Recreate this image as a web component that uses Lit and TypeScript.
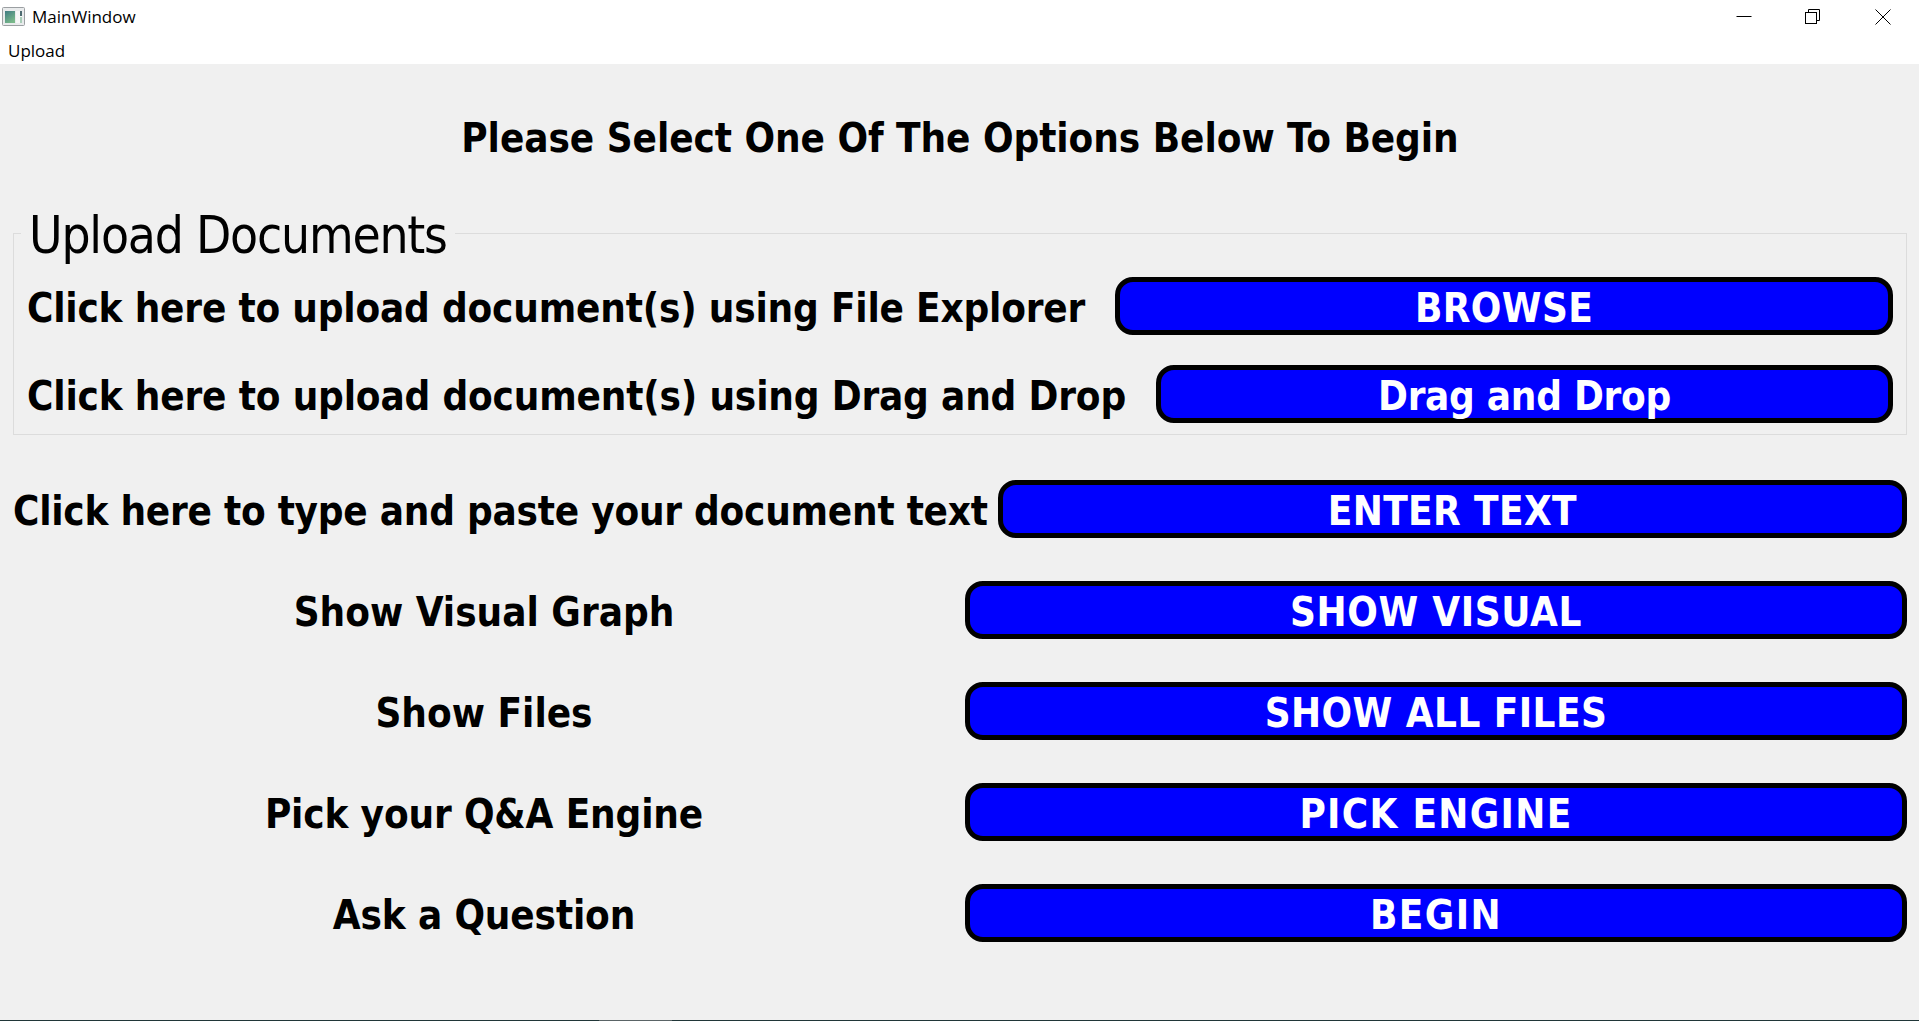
import { LitElement, html, css } from "lit";
import { customElement } from "lit/decorators.js";

type Item = { label: string; btn: string; labelLs?: number; btnLs?: number };

const UPLOADS: Item[] = [
  { label: "Click here to upload document(s) using File Explorer", btn: "BROWSE", labelLs: -0.19, btnLs: 0.4 },
  { label: "Click here to upload document(s) using Drag and Drop", btn: "Drag and Drop", labelLs: -0.17, btnLs: -0.28 },
];

const LOWER: Item[] = [
  { label: "Show Visual Graph", btn: "SHOW VISUAL", btnLs: 0.66 },
  { label: "Show Files", btn: "SHOW ALL FILES", btnLs: 0.44 },
  { label: "Pick your Q&A Engine", btn: "PICK ENGINE", labelLs: -0.15, btnLs: 1.3 },
  { label: "Ask a Question", btn: "BEGIN", labelLs: -0.15, btnLs: 1.4 },
];

const ls = (v?: number) => (v ? `letter-spacing:${v}px` : "");

@customElement("app-root")
export class AppRoot extends LitElement {
  static styles = css`
    :host {
      display: flex;
      flex-direction: column;
      width: 1919px;
      height: 1021px;
      overflow: hidden;
      background: #fff;
      font-family: "DejaVu Sans Condensed", "DejaVu Sans", sans-serif;
      color: #000;
    }
    .titlebar {
      height: 32px;
      display: flex;
      align-items: center;
      flex: none;
    }
    .appicon { margin: 1px 0 0 2px; flex: none; }
    .wintitle {
      margin-left: 6px;
      font: 17px "Open Sans", sans-serif;
      flex: 1;
    }
    .winbtn {
      width: 69px;
      height: 32px;
      box-sizing: border-box;
      padding-top: 9px;
      display: flex;
      align-items: flex-start;
      justify-content: center;
    }
    .winbtn.close { width: 72px; }
    .menubar {
      height: 32px;
      box-sizing: border-box;
      flex: none;
      padding: 4px 8px 0;
      display: flex;
      align-items: center;
      font: 17px "Open Sans", sans-serif;
    }
    .content {
      flex: 1;
      background: #f0f0f0;
      padding: 0 12px 0 13px;
      min-height: 0;
    }
    .heading {
      height: 141px;
      padding-top: 3px;
      display: flex;
      align-items: center;
      justify-content: center;
      font-size: 40px;
      font-weight: 700;
      letter-spacing: -0.05px;
    }
    fieldset {
      margin: 0;
      padding: 0 13px 11px;
      border: 1px solid #dcdcdc;
      min-width: 0;
      display: flex;
      flex-direction: column;
      gap: 30px;
    }
    legend {
      margin-left: -6px;
      padding: 6px 8px 0;
      font-size: 51px;
      line-height: 44px;
      font-weight: 400;
      letter-spacing: -1.2px;
    }
    .first { margin-top: 19px; }
    .row {
      display: flex;
      align-items: center;
      gap: 30px;
      font-size: 40px;
      font-weight: 700;
      white-space: nowrap;
    }
    .row > span, .grid > span { padding-top: 3px; }
    .button {
      flex: 1;
      height: 58px;
      box-sizing: border-box;
      padding-top: 3px;
      background: #0000ff;
      border: 5px solid #000;
      border-radius: 18px;
      color: #fff;
      font-size: 40px;
      font-weight: 700;
      display: flex;
      align-items: center;
      justify-content: center;
      white-space: nowrap;
    }
    .rows { margin-top: 45px; display: flex; flex-direction: column; gap: 43px; }
    .row.enter { gap: 10px; }
    .grid {
      display: grid;
      grid-template-columns: 942px 1fr;
      column-gap: 10px;
      align-items: center;
      font-size: 40px;
      font-weight: 700;
    }
    .grid .label { text-align: center; }
    .edge {
      height: 1px;
      flex: none;
      background: linear-gradient(to right, #203638 599px, #5a6466 599px, #5a6466 672px, #203638 672px);
    }
  `;

  render() {
    return html`
      <div class="titlebar">
        <svg class="appicon" width="24" height="19" viewBox="0 0 24 19">
          <defs>
            <linearGradient id="pane" x1="0" y1="0" x2="0.6" y2="1">
              <stop offset="0" stop-color="#3e7a82"/>
              <stop offset="1" stop-color="#79b98a"/>
            </linearGradient>
          </defs>
          <rect x="0.5" y="0.5" width="22" height="18" rx="1" fill="#e9ebec" stroke="#9b9fa2"/>
          <rect x="3" y="4" width="10" height="12" fill="url(#pane)"/>
          <rect x="14" y="4" width="6" height="12" fill="#f6f7f7"/>
          <rect x="18" y="4" width="2" height="5" fill="#4d6a70"/>
          <rect x="18" y="10" width="2" height="6" fill="#a9cdb8"/>
        </svg>
        <span class="wintitle">MainWindow</span>
        <div class="winbtn">
          <svg width="16" height="16" viewBox="0 0 16 16"><path d="M0.5 7.5H15.5" stroke="#000" fill="none"/></svg>
        </div>
        <div class="winbtn">
          <svg width="16" height="16" viewBox="0 0 16 16" fill="none" stroke="#000"><rect x="0.5" y="3.5" width="11" height="11"/><path d="M3.5 3.5V0.5H14.5V11.5H11.5"/></svg>
        </div>
        <div class="winbtn close">
          <svg width="16" height="16" viewBox="0 0 16 16" fill="none" stroke="#000"><path d="M0.5 0.5L15.5 15.5M15.5 0.5L0.5 15.5"/></svg>
        </div>
      </div>
      <div class="menubar">Upload</div>
      <div class="content">
        <div class="heading">Please Select One Of The Options Below To Begin</div>
        <fieldset>
          <legend>Upload Documents</legend>
          ${UPLOADS.map(
            (it, i) => html`
              <div class="row ${i === 0 ? "first" : ""}">
                <span style=${ls(it.labelLs)}>${it.label}</span>
                <div class="button" style=${ls(it.btnLs)}>${it.btn}</div>
              </div>
            `
          )}
        </fieldset>
        <div class="rows">
          <div class="row enter">
            <span style=${ls(-0.24)}>Click here to type and paste your document text</span>
            <div class="button" style=${ls(0.37)}>ENTER TEXT</div>
          </div>
          ${LOWER.map(
            (it) => html`
              <div class="grid">
                <span class="label" style=${ls(it.labelLs)}>${it.label}</span>
                <div class="button" style=${ls(it.btnLs)}>${it.btn}</div>
              </div>
            `
          )}
        </div>
      </div>
      <div class="edge"></div>
    `;
  }
}
